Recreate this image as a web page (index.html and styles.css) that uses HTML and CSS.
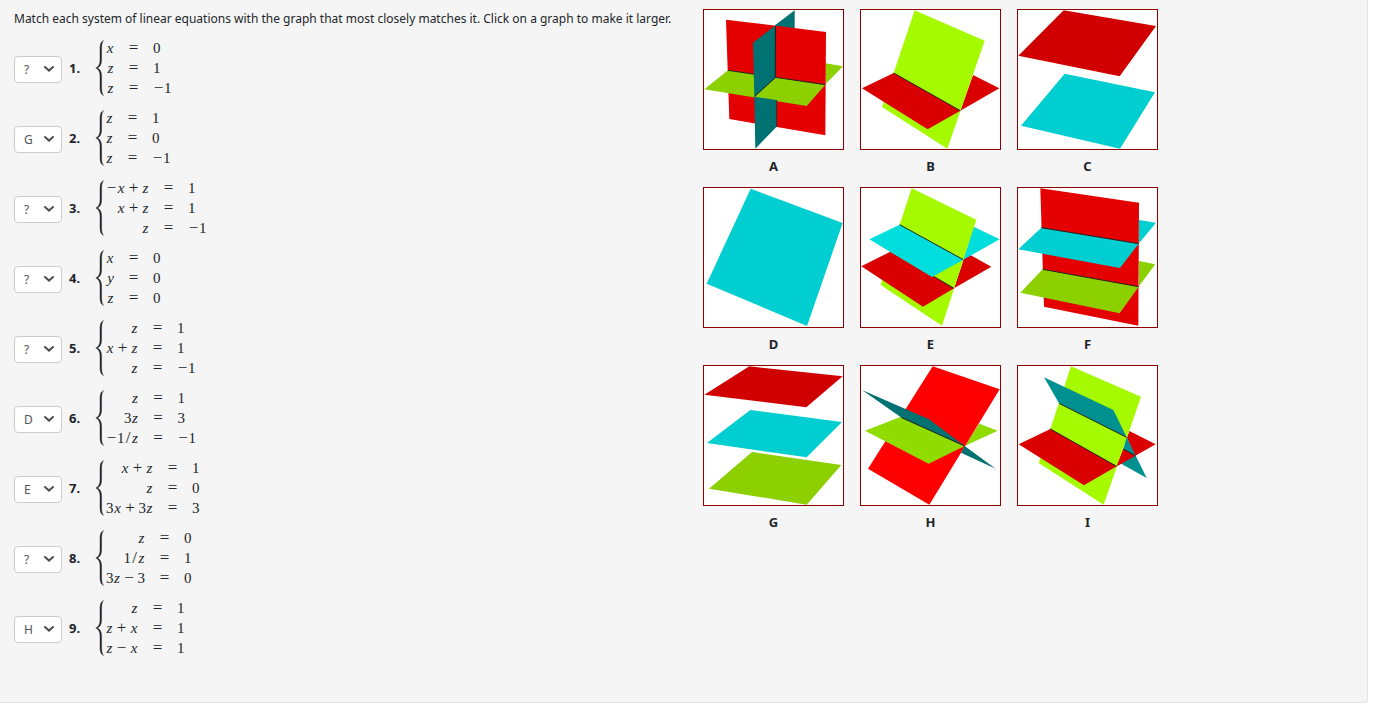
FILE: index.html
```html
<!DOCTYPE html>
<html lang="en">
  <head>
    <meta charset="UTF-8" />
    <meta name="viewport" content="width=device-width, initial-scale=1.0" />
    <title>Linear Systems</title>
    <link rel="stylesheet" href="styles.css">
  </head>
  <body>
    <!-- shared shapes -->
    <svg class="defs" width="0" height="0">
      <symbol id="brace" viewBox="0 0 9 56">
        <path d="M8.500 .5C5.500 2 5 5 5 9V20C5 24.500 3.500 26.500 .8 28C3.500 29.500 5 31.500 5 36V47C5 51 5.500 54 8.500 55.500C7 53.500 6.600 51 6.600 47V36C6.600 31.500 5 29 2.200 28C5 27 6.600 24.500 6.600 20V9C6.600 5 7 2.500 8.500 .5Z" fill="#212529" stroke="#212529" stroke-width=".4" />
      </symbol>
      <symbol id="chevron" viewBox="0 0 10 6">
        <path d="M1 1L5 4.600L9 1" fill="none" stroke="#505050" stroke-width="2" stroke-linecap="round" />
      </symbol>
    </svg>

    <form class="problem">
      <div class="questions">
        <p class="prompt">Match each system of linear equations with the graph that most closely matches it. Click on a graph to make it larger.</p>
        <ol id="systems"></ol>
      </div>

      <div class="graphs">
        <figure>
          <button type="button" aria-label="Graph A">
            <svg viewBox="27 30 417 417">
              <polygon points="240,76 299,31 299,90 240,110" fill="#007272" />
              <polygon points="392,190 444,199 392,252" fill="#8cd000" />
              <polygon points="93,59 393,96 391,406 103,357" fill="#e40000" />
              <polygon points="28,268 99,211 391,254 335,318" fill="#8cd000" />
              <path d="M99 211L391 254M241 78V233M244 300V381" class="edge" />
              <polygon points="174,128 240,77 241,233 178,290" fill="#007272" />
              <polygon points="178,290 244,300 244,381 181,446" fill="#007272" />
              <path d="M241 78V233L178 290" class="edge" />
            </svg>
          </button>
          <figcaption>A</figcaption>
        </figure>
        <figure>
          <button type="button" aria-label="Graph B">
            <svg viewBox="18 30 417 417">
              <polygon points="354,225 433,265 316,332" fill="#da0000" />
              <polygon points="179,31 389,122 277,446 81,321 116,219" fill="#a6fa00" />
              <polygon points="21,265 116,219 316,332 218,388" fill="#da0000" />
              <path d="M116 219L316 332" class="edge" />
            </svg>
          </button>
          <figcaption>B</figcaption>
        </figure>
        <figure>
          <button type="button" aria-label="Graph C">
            <svg viewBox="489 30 417 417">
              <polygon points="626,31 903,78 794,229 490,167" fill="#d00000" />
              <polygon points="629,221 900,277 795,446 498,377" fill="#00ced0" />
            </svg>
          </button>
          <figcaption>C</figcaption>
        </figure>
        <figure>
          <button type="button" aria-label="Graph D">
            <svg viewBox="27 24 417 417">
              <polygon points="167,26 443,129 336,438 35,311" fill="#00ced0" />
            </svg>
          </button>
          <figcaption>D</figcaption>
        </figure>
        <figure>
          <button type="button" aria-label="Graph E">
            <svg viewBox="498 24 417 417">
              <polygon points="808,232 826,225 889,260 777,325" fill="#da0000" />
              <polygon points="836,140 914,178 805,239" fill="#00dddd" />
              <polygon points="650,25 844,119 741,437 557,315 614,134" fill="#a6fa00" />
              <polygon points="499,259 586,215 777,325 684,380" fill="#da0000" />
              <polygon points="805,239 777,325 716,289" fill="#a6fa00" />
              <path d="M716 289L777 325" class="edge" />
              <polygon points="523,178 614,134 805,239 711,291" fill="#00dddd" />
              <path d="M614 134L805 239" class="edge" />
            </svg>
          </button>
          <figcaption>E</figcaption>
        </figure>
        <figure>
          <button type="button" aria-label="Graph F">
            <svg viewBox="39 24 417 417">
              <polygon points="402,120 453,128 402,190" fill="#00ced0" />
              <polygon points="402,243 451,253 402,318" fill="#8cd000" />
              <polygon points="106,25 402,68 400,437 117,380" fill="#e40000" />
              <polygon points="46,338 113,268 401,320 344,400" fill="#8cd000" />
              <path d="M113 268L401 320" class="edge" />
              <polygon points="40,208 109,143 401,191 345,264" fill="#00ced0" />
              <path d="M109 143L401 191" class="edge" />
            </svg>
          </button>
          <figcaption>F</figcaption>
        </figure>
        <figure>
          <button type="button" aria-label="Graph G">
            <svg viewBox="27 30 417 417">
              <polygon points="163,31 443,61 334,154 28,116" fill="#d00000" />
              <polygon points="166,162 441,198 335,304 36,261" fill="#00ced0" />
              <polygon points="171,288 439,327 335,446 42,398" fill="#8cd000" />
            </svg>
          </button>
          <figcaption>G</figcaption>
        </figure>
        <figure>
          <button type="button" aria-label="Graph H">
            <svg viewBox="498 30 417 417">
              <polygon points="853,203 908,224 809,270" fill="#90dc00" />
              <polygon points="713,31 914,100 703,446 519,338" fill="#ff0000" />
              <polygon points="809,270 902,338 798,290" fill="#007272" />
              <polygon points="510,224 618,182 809,270 701,323" fill="#90dc00" />
              <polygon points="501,102 702,190 809,270 620,185" fill="#007272" />
              <path d="M620 185L809 270" class="edge" />
            </svg>
          </button>
          <figcaption>H</figcaption>
        </figure>
        <figure>
          <button type="button" aria-label="Graph I">
            <svg viewBox="39 30 417 417">
              <polygon points="365,244 425,366 350,324" fill="#009090" />
              <polygon points="373,225 452,265 335,331 355,279 391,299 366,245" fill="#da0000" />
              <polygon points="198,31 408,122 296,446 101,321 136,219" fill="#a6fa00" />
              <polygon points="365,244 391,299 355,279" fill="#009090" />
              <polygon points="355,279 391,299 335,331" fill="#da0000" />
              <path d="M355 279L391 299" class="edge" />
              <polygon points="41,265 136,219 335,331 237,388" fill="#da0000" />
              <path d="M136 219L335 331" class="edge" />
              <polygon points="117,64 325,162 365,244 162,142" fill="#009090" />
              <path d="M162 142L365 244" class="edge" />
            </svg>
          </button>
          <figcaption>I</figcaption>
        </figure>
      </div>
    </form>

    <script src="script.js"></script>
  </body>
</html>
```

FILE: styles.css
```css
body {
  margin: 0;
  background: #fff;
  color: #212529;
  font-family: "Segoe UI", "Noto Sans", sans-serif;
  font-size: 13px;
  line-height: 20px;
}

.defs {
  position: absolute;
}

.problem {
  display: flex;
  align-items: flex-start;
  gap: 28px;
  margin-right: 29px;
  padding: 9px 14px 39px;
  background: #f5f5f5;
  border: 1px solid #e3e3e3;
  border-width: 0 1px 1px 0;
  border-bottom-right-radius: 4px;
}

.questions {
  flex: 0 0 661px;
}

.prompt {
  margin: 0 0 4px;
  font-size: 12px;
  white-space: nowrap;
}

#systems {
  list-style: none;
  margin: 0;
  padding: 0;
}

#systems li {
  display: flex;
  align-items: center;
  height: 70px;
}

/* Answer drop-down */
.answer {
  display: grid;
  align-items: center;
  width: 48px;
  margin: 2px 7px 0 0;
}

.answer select,
.answer svg {
  grid-area: 1 / 1;
}

.answer select {
  appearance: none;
  box-sizing: border-box;
  width: 100%;
  height: 27px;
  padding: 2px 0 0 9px;
  border: 1px solid #ccc;
  border-radius: 4px;
  background: #fff;
  color: #555;
  font: inherit;
  font-size: 12px;
}

.answer svg {
  justify-self: end;
  width: 10px;
  height: 6px;
  margin-right: 8px;
  pointer-events: none;
}

.number {
  width: 26px;
  font-weight: bold;
}

/* Systems of equations */
.brace {
  width: 9px;
  height: 56px;
  margin-right: 2px;
}

.system {
  display: grid;
  grid-template-columns: auto 11px auto;
  column-gap: 14px;
  align-items: baseline;
  font-family: "Liberation Serif", serif;
  font-size: 15px;
}

.lhs {
  text-align: right;
}

.system i,
.system b {
  display: inline-block;
  width: 7px;
  text-align: center;
}

.system b {
  width: 11px;
  font-size: 17px;
  font-weight: normal;
  line-height: 16px;
}

.system .x {
  width: 8px;
}

.system .binary {
  margin: 0 3px;
}

.system .slash {
  width: 7px;
}

/* Graph thumbnails */
.graphs {
  display: grid;
  grid-template-columns: repeat(3, 141px);
  gap: 11px 16px;
}

figure {
  margin: 0;
  text-align: center;
}

figure button {
  display: block;
  width: 100%;
  padding: 0;
  border: 1px solid #8b0000;
  background: #fff;
  cursor: pointer;
}

figure svg {
  display: block;
  width: 100%;
}

figcaption {
  padding-top: 6px;
  font-weight: bold;
}

.edge {
  fill: none;
  stroke: #222;
  stroke-width: 3;
}
```

FILE: script.js
```js
const systems = [
  { answer: "?", rows: ["x=0", "z=1", "z=−1"] },
  { answer: "G", rows: ["z=1", "z=0", "z=−1"] },
  { answer: "?", rows: ["−x+z=1", "x+z=1", "z=−1"] },
  { answer: "?", rows: ["x=0", "y=0", "z=0"] },
  { answer: "?", rows: ["z=1", "x+z=1", "z=−1"] },
  { answer: "D", rows: ["z=1", "3z=3", "−1/z=−1"] },
  { answer: "E", rows: ["x+z=1", "z=0", "3x+3z=3"] },
  { answer: "?", rows: ["z=0", "1/z=1", "3z−3=0"] },
  { answer: "H", rows: ["z=1", "z+x=1", "z−x=1"] },
];

const choices = ["?", "A", "B", "C", "D", "E", "F", "G", "H", "I"];

// Variables are italic, + and − get space around them unless they lead
function format(side) {
  return [...side]
    .map((c, i) => {
      if (/[xyz]/.test(c)) return `<i class="${c}">${c}</i>`;
      if (/[+−]/.test(c)) return `<b class="${i ? "binary" : "sign"}">${c}</b>`;
      if (c === "/") return `<b class="slash">/</b>`;
      return c;
    })
    .join("");
}

const list = document.getElementById("systems");

systems.forEach((system, i) => {
  const n = i + 1;
  const options = choices
    .map((c) => `<option${c === system.answer ? " selected" : ""}>${c}</option>`)
    .join("");
  const rows = system.rows
    .map((row) => {
      const [left, right] = row.split("=");
      return `<span class="lhs">${format(left)}</span><b>=</b><span>${format(right)}</span>`;
    })
    .join("");

  const item = document.createElement("li");
  item.innerHTML = `
    <div class="answer">
      <select id="answer-${n}">${options}</select>
      <svg><use href="#chevron" /></svg>
    </div>
    <label class="number" for="answer-${n}">${n}.</label>
    <svg class="brace"><use href="#brace" /></svg>
    <div class="system">${rows}</div>`;
  list.appendChild(item);
});
```
